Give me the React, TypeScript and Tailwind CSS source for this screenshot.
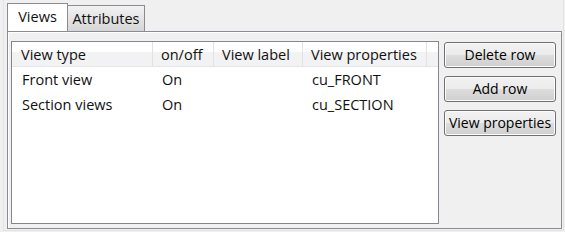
const font = { fontFamily: '"Open Sans", "Noto Sans", sans-serif' };

const columns = [
  { label: "View type", width: "w-[141px]" },
  { label: "on/off", width: "w-[61px]" },
  { label: "View label", width: "w-[89px]" },
  { label: "View properties", width: "w-[124px]" },
];

const rows = [
  ["Front view", "On", "", "cu_FRONT"],
  ["Section views", "On", "", "cu_SECTION"],
];

function Button({ children }: { children: string }) {
  return (
    <button className="flex h-[26px] w-[112px] items-center justify-center rounded-[3px] border border-[#707070] bg-[linear-gradient(#f2f2f2_0%,#ebebeb_50%,#dddddd_50%,#cfcfcf_100%)] text-[14px] leading-none text-black shadow-[inset_0_0_0_1px_#fcfcfc]">
      {children}
    </button>
  );
}

export default function App() {
  return (
    <div className="h-[232px] w-[565px] bg-[#f0f0f0] pl-[3px] pr-px text-[14.5px] text-[#111]" style={font}>
      <div className="flex h-[231px] flex-col border-x border-b border-[#e3e3e3] pl-[3px] pr-px pb-px">
        {/* Tabs */}
        <div className="flex h-[31px] items-end pt-[3px]">
          <div className="flex h-[28px] w-[61px] items-center justify-center border border-b-0 border-[#898c95] bg-white pb-[2px]">
            Views
          </div>
          <div className="flex h-[26px] w-[77px] items-center justify-center border border-b-0 border-l-0 border-[#898c95] bg-[linear-gradient(#f2f2f2,#d6d6d6)]">
            Attributes
          </div>
        </div>

        {/* Panel */}
        <div className="flex flex-1 gap-[5px] border border-[#898c95] bg-[#f0f0f0] pb-[4px] pl-[3px] pr-[5px] pt-[9px] shadow-[inset_1px_1px_0_#ffffff]">
          {/* Table */}
          <div className="flex flex-1 flex-col border border-[#828790] bg-white">
            <div className="flex h-[25px] border-b border-[#e5e5e5] bg-[linear-gradient(#ffffff_0%,#ffffff_42%,#f3f3f3_42%,#f1f2f4_100%)]">
              {columns.map((c, i) => (
                <div
                  key={c.label}
                  className={`${c.width} flex items-center border-r border-[#e2e2e2] pt-px ${i === 0 ? "pl-[9px]" : "pl-[8px]"}`}
                >
                  {c.label}
                </div>
              ))}
            </div>
            {rows.map((r) => (
              <div key={r[0]} className="flex h-[25px]">
                {r.map((cell, i) => (
                  <div
                    key={i}
                    className={`${columns[i].width} flex items-center ${i === 0 ? "pl-[10px]" : "pl-[9px]"}`}
                  >
                    {cell}
                  </div>
                ))}
              </div>
            ))}
          </div>

          {/* Buttons */}
          <div className="flex flex-col gap-[8px] pt-px">
            <Button>Delete row</Button>
            <Button>Add row</Button>
            <Button>View properties</Button>
          </div>
        </div>
      </div>
    </div>
  );
}
